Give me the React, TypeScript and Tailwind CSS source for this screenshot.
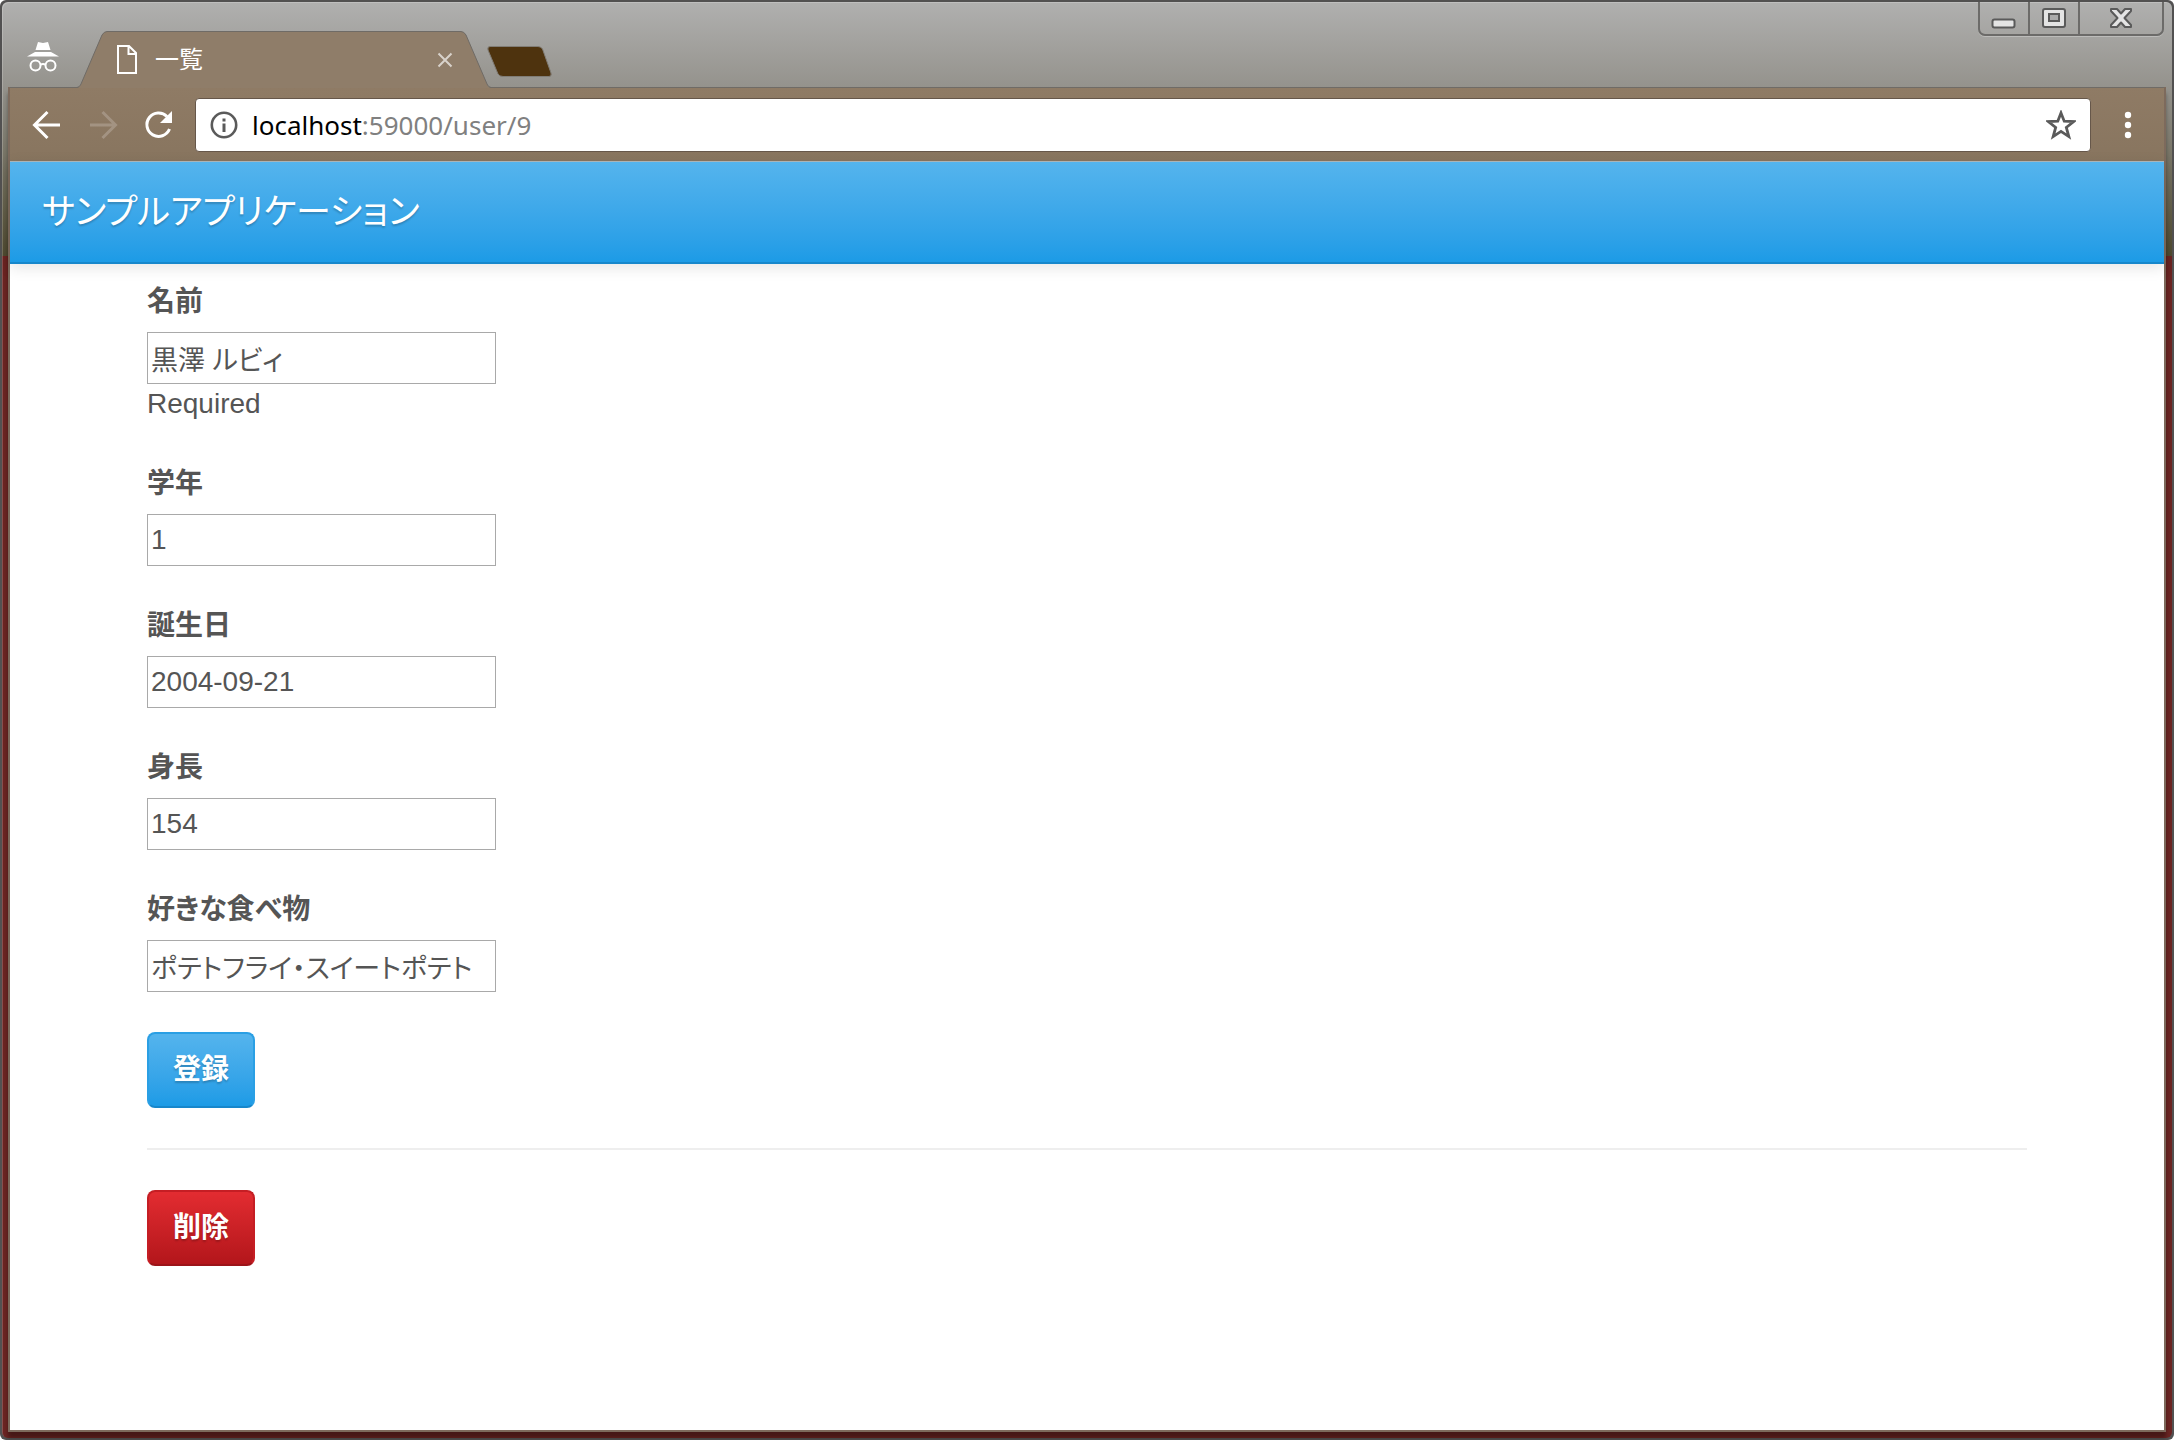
import type { ReactNode } from 'react';

const JP = "font-['Liberation_Sans','Noto_Sans_CJK_JP',sans-serif]";

function WindowButton({ label, className, children }: { label: string; className: string; children: ReactNode }) {
  return (
    <button type="button" aria-label={label} className={`flex items-center justify-center ${className}`}>
      {children}
    </button>
  );
}

function TitleBar() {
  return (
    <div className="flex h-[85px] items-stretch">
      <div className="flex w-[69px] shrink-0 items-end justify-center pb-[14px]">
        <svg width="34" height="32" viewBox="0 0 34 32" aria-hidden="true">
          <path fill="#fff" d="M12 1l5 1 5-1 2.5 8h-15zM9 11h16l8 4.500H1z" />
          <g fill="none" stroke="#fff" strokeWidth="2">
            <circle cx="9.500" cy="24.500" r="5" />
            <circle cx="24.500" cy="24.500" r="5" />
            <path d="M14.500 23.500q2.500-1 5 0" />
          </g>
        </svg>
      </div>
      <div className="relative z-10 -mb-px mt-[29px] w-[414px] shrink-0">
        <svg className="absolute inset-0 h-full w-full" viewBox="0 0 414 57" preserveAspectRatio="none" aria-hidden="true">
          <path d="M0 57Q3 56 4 53L25 4Q27 .5 30 .5H384Q387 .5 389 4L410 53Q411 56 414 57z" fill="#8f7d69" />
          <path d="M0 56.500Q3 56 4 53L25 4Q27 .5 30 .5H384Q387 .5 389 4L410 53Q411 56 414 56.500" fill="none" stroke="#6f6b66" />
        </svg>
        <div className="relative flex h-full items-center pl-[39px] pr-[38px]">
          <svg width="22" height="30" viewBox="0 0 22 30" fill="none" stroke="#fff" strokeWidth="2" aria-hidden="true">
            <path d="M2 1h11l7 7v20H2zM12.500 1.500V9H20" />
          </svg>
          <span className={`ml-[17px] flex-1 text-[24px] leading-[32px] text-white ${JP}`}>一覧</span>
          <button type="button" aria-label="Close tab">
            <svg width="16" height="16" viewBox="0 0 16 16" stroke="#d8d2cb" strokeWidth="2" aria-hidden="true">
              <path d="M1.500 1.500l13 13M14.500 1.500l-13 13" />
            </svg>
          </button>
        </div>
      </div>
      <button type="button" aria-label="New tab" className="-ml-[6px] mt-[43px] h-[34px] w-[68px]">
        <svg width="68" height="34" viewBox="0 0 68 34" aria-hidden="true">
          <path d="M5 1.500H53Q56 1.500 57.500 4L66 28Q67 31.500 64 31.500H18Q14.500 31.500 13 29L3 5Q2 1.500 5 1.500z" fill="#4e330e" stroke="#817d76" />
        </svg>
      </button>
      <div className="flex-1" />
      <div className="mr-[2px] flex h-[34px] rounded-b-[7px] border-2 border-t-0 border-[#6c6b69] shadow-[0_1px_0_#bdbdbb]">
        <WindowButton label="Minimize" className="w-[50px] border-r-2 border-[#6c6b69]">
          <svg width="26" height="26" viewBox="0 0 26 26" aria-hidden="true">
            <rect x="1.500" y="14.500" width="22" height="8" rx="2" fill="#e4e4e4" stroke="#5a5a5a" strokeWidth="2" />
          </svg>
        </WindowButton>
        <WindowButton label="Maximize" className="w-[50px] border-r-2 border-[#6c6b69]">
          <svg width="26" height="22" viewBox="0 0 26 22" aria-hidden="true">
            <rect x="2" y="2" width="22" height="18" rx="2" fill="#e4e4e4" stroke="#5a5a5a" strokeWidth="2" />
            <rect x="8" y="7" width="10" height="7" fill="#aaa" stroke="#5a5a5a" strokeWidth="2" />
          </svg>
        </WindowButton>
        <WindowButton label="Close" className="w-[82px]">
          <svg width="24" height="22" viewBox="0 0 24 22" aria-hidden="true">
            <path d="M2 2H8L12 6.500 16 2H22V4L15.500 11 22 18V20H16L12 15.500 8 20H2V18L8.500 11 2 4z" fill="#e4e4e4" stroke="#5a5a5a" strokeWidth="2" strokeLinejoin="round" />
          </svg>
        </WindowButton>
      </div>
    </div>
  );
}

function Toolbar() {
  return (
    <div className="flex h-[74px] items-center border-t border-[#6f6b66] bg-linear-to-b from-[#8f7b65] to-[#88755f] pl-[21px] pr-[32px]">
      <button type="button" aria-label="Back">
        <svg width="32" height="32" viewBox="0 0 32 32" fill="none" stroke="#fff" strokeWidth="3" aria-hidden="true">
          <path d="M29 16H5M16.500 3L3.500 16l13 13" />
        </svg>
      </button>
      <button type="button" aria-label="Forward" className="ml-[24px]">
        <svg width="32" height="32" viewBox="0 0 32 32" fill="none" stroke="#a39382" strokeWidth="3" aria-hidden="true">
          <path d="M3 16h24M15.500 3l13 13-13 13" />
        </svg>
      </button>
      <button type="button" aria-label="Reload" className="ml-[24px]">
        <svg width="32" height="32" viewBox="0 0 32 32" aria-hidden="true">
          <path d="M26.500 20A11.700 11.700 0 1 1 24 7.500" fill="none" stroke="#fff" strokeWidth="3" />
          <path d="M29 2v12H17z" fill="#fff" />
        </svg>
      </button>
      <div className="ml-[20px] flex h-[54px] flex-1 items-center rounded-[4px] border border-[#66574a] bg-white px-[14px]">
        <svg width="28" height="28" viewBox="0 0 28 28" aria-hidden="true">
          <circle cx="14" cy="14" r="12.200" fill="none" stroke="#5a5a5a" strokeWidth="2.600" />
          <path d="M12.500 12.500h3V21h-3zM12.500 7.500h3v3h-3z" fill="#5a5a5a" />
        </svg>
        <div className="ml-[14px] flex-1 font-['Noto_Sans','Open_Sans',sans-serif] text-[26px] leading-[36px] text-[#808080]">
          <span className="text-black">localhost</span>:59000/user/9
        </div>
        <button type="button" aria-label="Bookmark">
          <svg width="30" height="30" viewBox="2 2 26 26" aria-hidden="true">
            <path d="M15 4.500l2.800 7.200 8.200.3-6.400 5.100 2.200 7.900L15 20.500 8.200 25l2.200-7.900L4 12l8.200-.3z" fill="none" stroke="#5a5a5a" strokeWidth="2.400" />
          </svg>
        </button>
      </div>
      <button type="button" aria-label="Menu" className="ml-[33px]">
        <svg width="8" height="28" viewBox="0 0 8 28" fill="#fff" aria-hidden="true">
          <circle cx="4" cy="4" r="3.200" />
          <circle cx="4" cy="14" r="3.200" />
          <circle cx="4" cy="24" r="3.200" />
        </svg>
      </button>
    </div>
  );
}

const fields = [
  { id: 'name', label: '名前', value: '黒澤 ルビィ', note: 'Required', size: 'text-[27px]' },
  { id: 'grade', label: '学年', value: '1', size: 'text-[28px]' },
  { id: 'birthday', label: '誕生日', value: '2004-09-21', size: 'text-[28px]' },
  { id: 'height', label: '身長', value: '154', size: 'text-[28px]' },
  { id: 'food', label: '好きな食べ物', value: 'ポテトフライ・スイートポテト', size: 'text-[27px]' },
];

export default function App() {
  return (
    <div lang="ja" className="flex min-h-screen flex-col rounded-[6px] bg-[#525151] p-[2px]">
      <div className="flex flex-1 flex-col rounded-[6px] bg-[linear-gradient(#b0b0af_0px,#94928c_86px,#4f4a30_254px,#6b2422_254px)] px-[6px] pb-[6px] shadow-[inset_1px_1px_0_rgba(255,255,255,0.2)]">
        <TitleBar />
        <div className="flex flex-1 flex-col border-x-2 border-b-2 border-[#7d6a5c] shadow-[0_6px_4px_rgba(0,0,0,0.35)]">
          <Toolbar />
          <main className={`flex flex-1 flex-col bg-white ${JP} text-[28px] leading-[40px] text-[#555]`}>
            <header className="flex h-[103px] items-center border-b-2 border-t border-b-[#1787cb] border-t-[#a9b4b8] bg-linear-to-b from-[#54b4ed] to-[#1c9be6] px-[32px] shadow-[0_4px_14px_rgba(0,0,0,0.1)]">
              <h1 className="text-[35px] leading-[48px] text-white [font-feature-settings:'palt'] [text-shadow:0_2px_2px_rgba(0,0,0,0.2)]">
                サンプルアプリケーション
              </h1>
            </header>
            <form className="mx-[137px] flex flex-col items-start gap-[40px] pt-[18px]" onSubmit={(e) => e.preventDefault()}>
              {fields.map((f) => (
                <div key={f.id} className="flex flex-col">
                  <label htmlFor={f.id} className="mb-[10px] font-bold [font-feature-settings:'palt']">
                    {f.label}
                  </label>
                  <input
                    id={f.id}
                    defaultValue={f.value}
                    className={`h-[52px] w-[349px] border border-[#a9a9a9] bg-white px-[3px] [font-feature-settings:'palt'] ${f.size}`}
                  />
                  {f.note && <span>{f.note}</span>}
                </div>
              ))}
              <button
                type="submit"
                className="h-[76px] rounded-[8px] border-2 border-[#2a9fe4] border-b-[#1787cb] bg-linear-to-b from-[#54b4ed] to-[#1c9be6] px-[24px] font-bold text-white [text-shadow:0_2px_2px_rgba(0,0,0,0.2)]"
              >
                登録
              </button>
              <hr className="w-full border-t-2 border-[#eee]" />
              <button
                type="button"
                className="h-[76px] rounded-[8px] border-2 border-[#c51e24] border-b-[#9c1419] bg-linear-to-b from-[#e32c31] to-[#b3161b] px-[24px] font-bold text-white [text-shadow:0_2px_2px_rgba(0,0,0,0.2)]"
              >
                削除
              </button>
            </form>
          </main>
        </div>
      </div>
    </div>
  );
}
